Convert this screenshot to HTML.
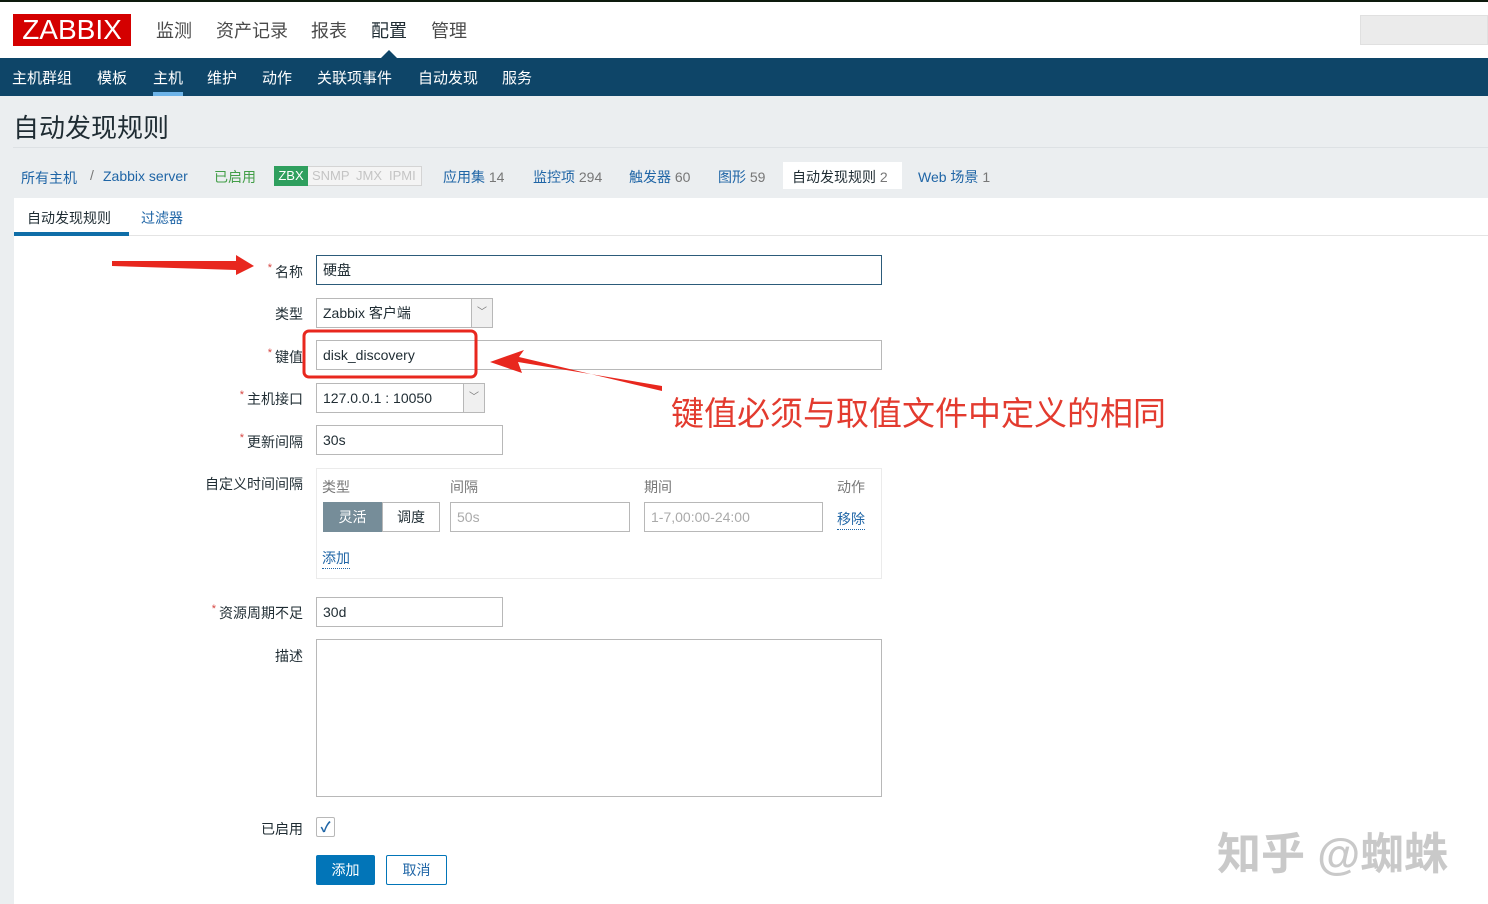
<!DOCTYPE html>
<html><head><meta charset="utf-8"><style>
*{margin:0;padding:0;box-sizing:border-box}
body{width:1488px;height:904px;overflow:hidden;position:relative;background:#ebeef0;font-family:"Liberation Sans","Noto Sans CJK SC",sans-serif;font-size:14px;color:#1f2c33}
.a{position:absolute;white-space:nowrap}
.top{left:0;top:0;width:1488px;height:58px;background:#fff;border-top:2px solid #0d1a0d}
.nav{left:0;top:58px;width:1488px;height:38px;background:#0e4568}
.nav span{position:absolute;top:9px;color:#fff;font-size:15px}
.m{top:17px;font-size:18px;color:#4a4a4a}
.lbl{right:1185px;font-size:14px;color:#1f2c33}
.lbl i{color:#d64541;font-style:normal;font-size:11px;margin-right:3px;vertical-align:top}
.inp{border:1px solid #b8b8b8;background:#fff;padding-left:6px;font-size:14px;color:#1f2c33;display:flex;align-items:center}
.blue{color:#1f65a6}
.n{color:#777}
</style></head><body>
<div class="a top"></div>
<div class="a" style="left:13px;top:14px;width:118px;height:32px;background:#d40000;color:#fff;font-size:28px;line-height:32px;text-align:center">ZABBIX</div>
<div class="a m" style="left:156px">监测</div>
<div class="a m" style="left:216px">资产记录</div>
<div class="a m" style="left:311px">报表</div>
<div class="a m" style="left:371px;color:#1f2c33">配置</div>
<div class="a m" style="left:431px">管理</div>
<div class="a" style="left:1360px;top:15px;width:128px;height:30px;background:#ebebeb;border:1px solid #e0e0e0"></div>
<div class="a nav">
<span style="left:12px">主机群组</span><span style="left:97px">模板</span><span style="left:153px">主机</span><span style="left:207px">维护</span><span style="left:262px">动作</span><span style="left:317px">关联项事件</span><span style="left:418px">自动发现</span><span style="left:502px">服务</span>
<div style="position:absolute;left:153px;top:34px;width:30px;height:4px;background:#6db3e8"></div>
</div>
<div class="a" style="left:381px;top:50px;width:0;height:0;border-left:8px solid transparent;border-right:8px solid transparent;border-bottom:8px solid #0e4568"></div>
<div class="a" style="left:13px;top:108px;font-size:26px;color:#1f2c33">自动发现规则</div>
<div class="a" style="left:13px;top:147px;width:1475px;height:1px;background:#dde1e4"></div>
<div class="a blue" style="left:21px;top:168px">所有主机</div>
<div class="a n" style="left:90px;top:167px">/</div>
<div class="a blue" style="left:103px;top:168px">Zabbix server</div>
<div class="a" style="left:214px;top:167px;color:#429e47">已启用</div>
<div class="a" style="left:274px;top:166px;width:148px;height:20px;border:1px solid #d4d4d4;background:#f4f4f4;font-size:13px;line-height:18px;color:#c4c4c4">
<span style="position:absolute;left:-1px;top:-1px;width:34px;height:20px;background:#2f9f5e;color:#fff;text-align:center;line-height:20px">ZBX</span>
<span style="position:absolute;left:37px">SNMP</span><span style="position:absolute;left:81px">JMX</span><span style="position:absolute;left:114px">IPMI</span></div>
<div class="a blue" style="left:443px;top:167px">应用集 <span class="n">14</span></div>
<div class="a blue" style="left:533px;top:167px">监控项 <span class="n">294</span></div>
<div class="a blue" style="left:629px;top:167px">触发器 <span class="n">60</span></div>
<div class="a blue" style="left:718px;top:167px">图形 <span class="n">59</span></div>
<div class="a" style="left:783px;top:162px;width:119px;height:27px;background:#fff;padding:5px 0 0 9px">自动发现规则 <span class="n">2</span></div>
<div class="a blue" style="left:918px;top:167px">Web 场景 <span class="n">1</span></div>
<div class="a" style="left:14px;top:198px;width:1474px;height:706px;background:#fff"></div>
<div class="a" style="left:14px;top:235px;width:1474px;height:1px;background:#e4e4e4"></div>
<div class="a" style="left:27px;top:208px">自动发现规则</div>
<div class="a" style="left:14px;top:232px;width:115px;height:4px;background:#0f6ea8"></div>
<div class="a blue" style="left:141px;top:208px">过滤器</div>

<div class="a lbl" style="top:262px"><i>*</i>名称</div>
<div class="a inp" style="left:316px;top:255px;width:566px;height:30px;border-color:#2c5b7a">硬盘</div>
<div class="a lbl" style="top:304px">类型</div>
<div class="a inp" style="left:316px;top:298px;width:177px;height:30px">Zabbix 客户端</div>
<div class="a" style="left:471px;top:298px;width:22px;height:30px;border:1px solid #b8b8b8;background:#f0f0f0;color:#777;font-size:10px;text-align:center;line-height:28px">﹀</div>
<div class="a lbl" style="top:347px"><i>*</i>键值</div>
<div class="a inp" style="left:316px;top:340px;width:566px;height:30px">disk_discovery</div>
<div class="a lbl" style="top:389px"><i>*</i>主机接口</div>
<div class="a inp" style="left:316px;top:383px;width:169px;height:30px">127.0.0.1 : 10050</div>
<div class="a" style="left:463px;top:383px;width:22px;height:30px;border:1px solid #b8b8b8;background:#f0f0f0;color:#777;font-size:10px;text-align:center;line-height:28px">﹀</div>
<div class="a lbl" style="top:432px"><i>*</i>更新间隔</div>
<div class="a inp" style="left:316px;top:425px;width:187px;height:30px">30s</div>
<div class="a lbl" style="top:474px">自定义时间间隔</div>
<div class="a" style="left:316px;top:468px;width:566px;height:111px;border:1px solid #ebebeb"></div>
<div class="a n" style="left:322px;top:477px">类型</div>
<div class="a n" style="left:450px;top:477px">间隔</div>
<div class="a n" style="left:644px;top:477px">期间</div>
<div class="a n" style="left:837px;top:477px">动作</div>
<div class="a" style="left:323px;top:502px;width:59px;height:30px;background:#768d99;color:#fff;text-align:center;line-height:30px">灵活</div>
<div class="a" style="left:382px;top:502px;width:58px;height:30px;border:1px solid #b8b8b8;text-align:center;line-height:28px">调度</div>
<div class="a inp" style="left:450px;top:502px;width:180px;height:30px;color:#aaa">50s</div>
<div class="a inp" style="left:644px;top:502px;width:179px;height:30px;color:#aaa">1-7,00:00-24:00</div>
<div class="a blue" style="left:837px;top:509px;border-bottom:1px dotted #1f65a6">移除</div>
<div class="a blue" style="left:322px;top:548px;border-bottom:1px dotted #1f65a6">添加</div>
<div class="a lbl" style="top:603px"><i>*</i>资源周期不足</div>
<div class="a inp" style="left:316px;top:597px;width:187px;height:30px">30d</div>
<div class="a lbl" style="top:646px">描述</div>
<div class="a" style="left:316px;top:639px;width:566px;height:158px;border:1px solid #b8b8b8"></div>
<div class="a lbl" style="top:819px">已启用</div>
<div class="a" style="left:316px;top:817px;width:19px;height:20px;border:1px solid #b8b8b8;border-radius:2px;color:#1f65a6;font-size:14px;text-align:center;line-height:18px;font-weight:bold">✓</div>
<div class="a" style="left:316px;top:855px;width:59px;height:30px;background:#0275b8;color:#fff;text-align:center;line-height:30px;border-radius:2px">添加</div>
<div class="a" style="left:386px;top:855px;width:61px;height:30px;border:1px solid #0275b8;color:#1f65a6;text-align:center;line-height:28px;border-radius:2px">取消</div>

<svg class="a" style="left:0;top:0" width="1488" height="904">
<polygon points="112,261 236,261 236,255 254,266 236,275 236,270 112,266" fill="#e8271e"/>
<rect x="304" y="331" width="172" height="46" rx="5" fill="none" stroke="#e8271e" stroke-width="3"/>
<polygon points="662,386 518,362 522,373 490,362 524,350 519,357 662,391" fill="#e8271e"/>
</svg>
<div class="a" style="left:671px;top:387px;font-size:33px;color:#e33b2f">键值必须与取值文件中定义的相同</div>
<div class="a" style="left:1217px;top:818px;font-size:44px;color:#c9c9c9;font-weight:bold">知乎 @蜘蛛</div>
</body></html>
